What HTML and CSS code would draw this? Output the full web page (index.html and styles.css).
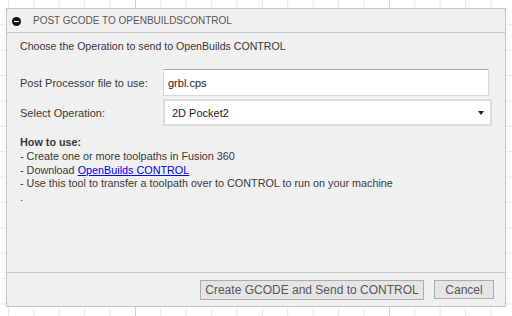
FILE: index.html
```html
<!DOCTYPE html>
<html lang="en">
<head>
    <meta charset="UTF-8">
    <title>Post GCODE to OpenBuildsCONTROL</title>
    <link rel="stylesheet" href="styles.css">
</head>
<body>

    <div class="dialog">
        <div class="dialog-header">
            <span class="collapse-icon"></span>
            <span class="dialog-title">POST GCODE TO OPENBUILDSCONTROL</span>
        </div>

        <div class="dialog-body">
            <p class="intro">Choose the Operation to send to OpenBuilds CONTROL</p>

            <div class="form-row">
                <label for="postFile">Post Processor file to use:</label>
                <input type="text" id="postFile" class="text-input" value="grbl.cps">
            </div>
            <div class="form-row">
                <label for="operation">Select Operation:</label>
                <div class="select-box" id="operation">
                    <span>2D Pocket2</span>
                    <span class="caret"></span>
                </div>
            </div>

            <div class="howto">
                <strong>How to use:</strong><br>
                - Create one or more toolpaths in Fusion 360<br>
                - Download <a href="#">OpenBuilds CONTROL</a><br>
                - Use this tool to transfer a toolpath over to CONTROL to run on your machine<br>
                .
            </div>
        </div>

        <div class="dialog-footer">
            <button class="btn btn-create">Create GCODE and Send to CONTROL</button>
            <button class="btn btn-cancel">Cancel</button>
        </div>
    </div>

</body>
</html>
```

FILE: styles.css
```css
body {
    margin: 0;
    height: 316px;
    font-family: 'Liberation Sans', Arial, sans-serif;
    color: #383838;
    background-color: #fff;
    /* cuadricula del lienzo */
    background-image:
        linear-gradient(to right, #d2d2d2 1px, transparent 1px),
        linear-gradient(to right, #e8e8e8 1px, transparent 1px),
        linear-gradient(to bottom, #e8e8e8 1px, transparent 1px);
    background-size: 254px 100%, 25.4px 25.4px, 25.4px 25.4px;
    background-position: 135px 0, 8px 0, 0 -1.2px;
    overflow: hidden;
}

.dialog {
    margin: 8px 0 0 6px;
    width: 498px;
    height: 297px;
    border: 1px solid #c4c4c4;
    background-color: #f0f0f0;
    display: flex;
    flex-direction: column;
}

.dialog-header {
    height: 23px;
    border-bottom: 1px solid #c8c8c8;
    display: flex;
    align-items: center;
    padding-left: 5px;
}

.collapse-icon {
    position: relative;
    width: 9px;
    height: 9px;
    border-radius: 50%;
    background-color: #111;
    margin-right: 12px;
    margin-top: 1px;
}

.collapse-icon::after {
    content: '';
    position: absolute;
    left: 2px;
    top: 4px;
    width: 5px;
    height: 1px;
    background-color: #fff;
}

.dialog-title {
    font-size: 10px;
    color: #555;
}

.dialog-body {
    flex: 1;
    padding: 7px 13px 0 13px;
    font-size: 11px;
}

.intro {
    margin: 0 0 17px 0;
    font-size: 10.6px;
}

.form-row {
    display: flex;
    align-items: center;
    margin-bottom: 3px;
}

.form-row label {
    width: 143px;
    flex-shrink: 0;
}

.text-input {
    width: 316px;
    height: 25px;
    padding: 0 4px;
    margin: 0;
    border: 1px solid #d8d8d8;
    border-top-color: #a8a8a8;
    background-color: #fff;
    font-family: inherit;
    font-size: 11px;
    color: #222;
    outline: none;
}

.select-box {
    width: 316px;
    height: 23px;
    padding: 0 6px 0 7px;
    border: 2px solid #dcdcdc;
    background-color: #fff;
    display: flex;
    align-items: center;
    justify-content: space-between;
    color: #222;
}

.caret {
    width: 0;
    height: 0;
    border-left: 3px solid transparent;
    border-right: 3px solid transparent;
    border-top: 4px solid #222;
    margin-top: 1px;
}

.howto {
    margin-top: 10px;
    font-size: 10.8px;
    line-height: 13.8px;
}

.howto strong {
    font-weight: bold;
}

.howto a {
    color: #0000ee;
}

.dialog-footer {
    height: 34px;
    border-top: 1px solid #c8c8c8;
    display: flex;
    justify-content: flex-end;
    align-items: flex-start;
    gap: 10px;
    padding: 7px 11px 0 0;
    box-sizing: border-box;
}

.btn {
    height: 20px;
    padding: 0 3px;
    margin: 0;
    border: 1px solid #acacac;
    background-color: #e5e5e5;
    font-family: inherit;
    font-size: 12px;
    color: #555;
}

.btn-create {
    width: 224px;
}

.btn-cancel {
    width: 60px;
    height: 19px;
}
```
